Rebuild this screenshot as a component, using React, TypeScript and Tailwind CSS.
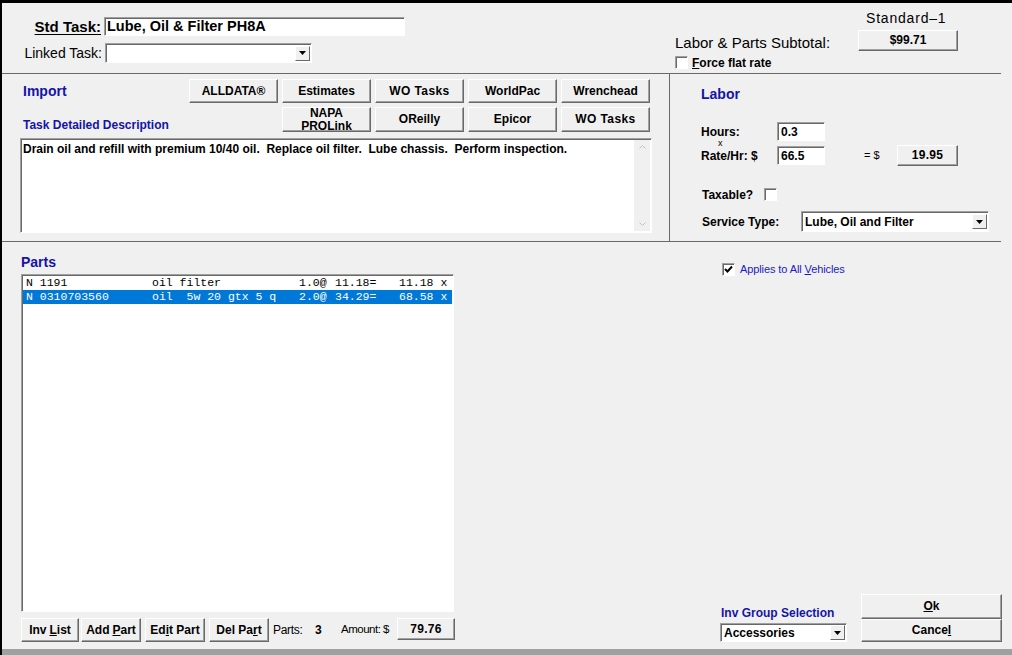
import React from "react";

const UI = "font-['Liberation_Sans',Arial,sans-serif]";

function Btn({ children, className = "" }: { children: React.ReactNode; className?: string }) {
  return (
    <div
      className={`flex items-center justify-center bg-[#f0f0f0] border border-t-white border-l-white border-r-[#696969] border-b-[#696969] shadow-[inset_-1px_-1px_0_#a0a0a0] text-[12px] font-bold text-black leading-[13px] text-center ${className}`}
    >
      {children}
    </div>
  );
}

function Sunken({ children, className = "" }: { children?: React.ReactNode; className?: string }) {
  return (
    <div
      className={`bg-white border border-t-[#a0a0a0] border-l-[#a0a0a0] border-b-white border-r-white shadow-[inset_1px_1px_0_#696969] ${className}`}
    >
      {children}
    </div>
  );
}

function Combo({ value, className = "" }: { value: string; className?: string }) {
  return (
    <Sunken className={`flex items-center ${className}`}>
      <span className="flex-1 pl-[3px] text-[12px] font-bold leading-none truncate">{value}</span>
      <div className="m-[1px] w-[15px] h-[15px] flex items-center justify-center bg-[#f0f0f0] border border-t-white border-l-white border-r-[#696969] border-b-[#696969]">
        <svg width="7" height="4" viewBox="0 0 7 4">
          <path d="M0 0h7L3.5 4z" fill="#000" />
        </svg>
      </div>
    </Sunken>
  );
}

function Check({ checked = false }: { checked?: boolean }) {
  return (
    <div className="w-[13px] h-[13px] bg-white border border-t-[#a0a0a0] border-l-[#a0a0a0] border-b-white border-r-white shadow-[inset_1px_1px_0_#696969] flex items-center justify-center">
      {checked && (
        <svg width="9" height="9" viewBox="0 0 9 9">
          <path d="M1 4l2.5 2.5L8 1.5" stroke="#000" strokeWidth="2" fill="none" />
        </svg>
      )}
    </div>
  );
}

const parts = [
  { code: "N 1191", desc: "oil filter", qty: "1.0@", price: "11.18=", total: "11.18 x", sel: false },
  { code: "N 0310703560", desc: "oil  5w 20 gtx 5 q", qty: "2.0@", price: "34.29=", total: "68.58 x", sel: true },
];

export default function App() {
  return (
    <div
      className={`${UI} w-[1012px] h-[655px] bg-[#f0f0f0] border-t-[3px] border-l-[2px] border-black flex flex-col overflow-hidden text-black`}
    >
      {/* header: task name, linked task, subtotal */}
      <div className="h-[71px] mr-[11px] border-b border-[#696969] flex shrink-0">
        <div className="w-[673px] pt-[14px] flex flex-col">
          <div className="flex items-center h-[19px]">
            <span className="w-[99px] text-right text-[15px] font-bold underline underline-offset-2 leading-none">
              Std Task:
            </span>
            <Sunken className="ml-[3px] w-[301px] h-[19px] flex items-center">
              <span className="pl-[2px] text-[14.5px] font-bold leading-none">Lube, Oil &amp; Filter PH8A</span>
            </Sunken>
          </div>
          <div className="flex items-center h-[20px] mt-[7px]">
            <span className="w-[100px] text-right text-[14px] leading-none">Linked Task:</span>
            <Combo value="" className="ml-[3px] w-[207px] h-[20px]" />
          </div>
        </div>
        <div className="flex flex-col pt-[7px]">
          <div className="h-[16px] leading-[16px] pl-[191px] text-[14px] tracking-[0.8px] whitespace-nowrap">
            Standard–1
          </div>
          <div className="flex items-center mt-[4px] h-[21px]">
            <span className="w-[183px] text-[15px] leading-none pt-[3px] whitespace-nowrap">Labor &amp; Parts Subtotal:</span>
            <Btn className="w-[100px] h-[21px]">$99.71</Btn>
          </div>
          <div className="flex items-center mt-[5px] h-[13px] gap-[4px]">
            <Check />
            <span className="text-[12px] font-bold leading-none">
              <u>F</u>orce flat rate
            </span>
          </div>
        </div>
      </div>

      {/* import / description + labor */}
      <div className="h-[168px] mr-[11px] border-b border-[#696969] flex shrink-0">
        <div className="w-[668px] border-r border-[#696969] flex flex-col pt-[5px]">
          <div className="flex h-[59px]">
            <div className="w-[187px] pl-[21px] flex flex-col text-[#1414a8] font-bold">
              <div className="h-[24px] leading-[24px] text-[14px]">Import</div>
              <div className="h-[24px] leading-[24px] mt-[10px] text-[12px] whitespace-nowrap">
                Task Detailed Description
              </div>
            </div>
            <div className="grid grid-cols-[repeat(5,89px)] grid-rows-[24px_25px] gap-x-[4px] gap-y-[4px] h-[53px]">
              <Btn>ALLDATA®</Btn>
              <Btn>Estimates</Btn>
              <Btn className="tracking-[0.4px]">WO Tasks</Btn>
              <Btn>WorldPac</Btn>
              <Btn>Wrenchead</Btn>
              <div />
              <Btn>
                NAPA
                <br />
                PROLink
              </Btn>
              <Btn>OReilly</Btn>
              <Btn>Epicor</Btn>
              <Btn className="tracking-[0.4px]">WO Tasks</Btn>
            </div>
          </div>
          <Sunken className="ml-[18px] w-[632px] h-[95px] flex">
            <div className="flex-1 pl-[2px] pt-[3px] text-[12px] font-bold leading-[14px] whitespace-pre">
              Drain oil and refill with premium 10/40 oil.  Replace oil filter.  Lube chassis.  Perform inspection.
            </div>
            <div className="w-[16px] my-[1px] mr-[1px] bg-[#f0f0f0] flex flex-col justify-between items-center py-[5px]">
              <svg width="7" height="4" viewBox="0 0 7 4">
                <path d="M0.5 3.5L3.5 0.5L6.5 3.5" stroke="#c2c2c2" fill="none" />
              </svg>
              <svg width="7" height="4" viewBox="0 0 7 4">
                <path d="M0.5 0.5L3.5 3.5L6.5 0.5" stroke="#c2c2c2" fill="none" />
              </svg>
            </div>
          </Sunken>
        </div>

        <div className="flex-1 pl-[31px] pt-[12px] flex flex-col text-[12px] font-bold">
          <div className="h-[16px] leading-[16px] text-[14px] text-[#1414a8]">Labor</div>
          <div className="flex items-center h-[19px] mt-[20px]">
            <span className="w-[76px] leading-none pt-[1px]">Hours:</span>
            <Sunken className="w-[48px] h-[19px] flex items-center pl-[3px] leading-none">0.3</Sunken>
          </div>
          <div className="h-[4px] leading-[4px] pl-[17px] text-[9px] font-normal">x</div>
          <div className="flex items-center h-[21px]">
            <span className="w-[76px] leading-none">Rate/Hr: $</span>
            <Sunken className="w-[48px] h-[19px] flex items-center pl-[3px] leading-none">66.5</Sunken>
            <span className="ml-[39px] w-[33px] text-[11px] font-normal leading-none">= $</span>
            <Btn className="w-[61px] h-[21px] tracking-[0.3px]">19.95</Btn>
          </div>
          <div className="flex items-center h-[13px] mt-[22px] pl-[1px]">
            <span className="w-[62px] leading-none">Taxable?</span>
            <Check />
          </div>
          <div className="flex items-center h-[21px] mt-[10px] pl-[1px]">
            <span className="w-[99px] leading-none">Service Type:</span>
            <Combo value="Lube, Oil and Filter" className="w-[188px] h-[21px]" />
          </div>
        </div>
      </div>

      {/* parts list and actions */}
      <div className="flex-1 flex min-h-0">
        <div className="w-[458px] pl-[19px] pt-[12px] flex flex-col">
          <div className="h-[16px] leading-[16px] text-[14px] font-bold text-[#1414a8]">Parts</div>
          <Sunken className="mt-[4px] w-[433px] h-[338px] pt-[1px] px-[1px]">
            {parts.map((p) => (
              <div
                key={p.code}
                className={`flex h-[14px] items-center pl-[3px] font-['Liberation_Mono',monospace] text-[11.5px] leading-none whitespace-pre ${
                  p.sel ? "bg-[#0078d7] text-white" : "text-black"
                }`}
              >
                <span className="w-[126px]">{p.code}</span>
                <span className="w-[147px]">{p.desc}</span>
                <span className="w-[36px]">{p.qty}</span>
                <span className="w-[64px]">{p.price}</span>
                <span>{p.total}</span>
              </div>
            ))}
          </Sunken>
          <div className="flex items-start mt-[6px] h-[24px]">
            <Btn className="w-[58px] h-[24px]">
              Inv <u className="ml-[3px]">L</u>ist
            </Btn>
            <Btn className="ml-[2px] w-[60px] h-[24px]">
              Add <u className="ml-[3px]">P</u>art
            </Btn>
            <Btn className="ml-[4px] w-[60px] h-[24px]">
              Ed<u>i</u>t Part
            </Btn>
            <Btn className="ml-[4px] w-[60px] h-[24px]">
              Del Pa<u>r</u>t
            </Btn>
            <div className="flex items-center h-[24px] text-[12px] leading-none">
              <span className="ml-[4px] w-[42px] tracking-[-0.3px]">Parts:</span>
              <span className="w-[26px] font-bold">3</span>
              <span className="w-[56px] text-[11.5px] tracking-[-0.5px]">Amount: $</span>
            </div>
            <Btn className="w-[58px] h-[22px] tracking-[0.3px]">79.76</Btn>
          </div>
        </div>

        <div className="flex-1 flex flex-col pb-[7px]">
          <div className="flex items-center h-[13px] mt-[21px] pl-[262px] gap-[5px]">
            <Check checked />
            <span className="text-[11px] leading-none text-[#1b1bc0] tracking-[-0.1px]">
              Applies to All <u>V</u>ehicles
            </span>
          </div>
          <div className="flex-1" />
          <div className="flex items-end pl-[260px]">
            <div className="flex flex-col">
              <div className="h-[14px] leading-[14px] pl-[1px] text-[12px] font-bold text-[#1414a8] whitespace-nowrap">
                Inv Group Selection
              </div>
              <Combo value="Accessories" className="mt-[3px] w-[127px] h-[19px]" />
            </div>
            <div className="ml-[14px] flex flex-col w-[141px]">
              <Btn className="h-[25px]">
                <u>O</u>k
              </Btn>
              <Btn className="h-[23px]">
                Cance<u>l</u>
              </Btn>
            </div>
          </div>
        </div>
      </div>

      <div className="h-[6px] bg-[#a0a0a0] shrink-0" />
    </div>
  );
}
